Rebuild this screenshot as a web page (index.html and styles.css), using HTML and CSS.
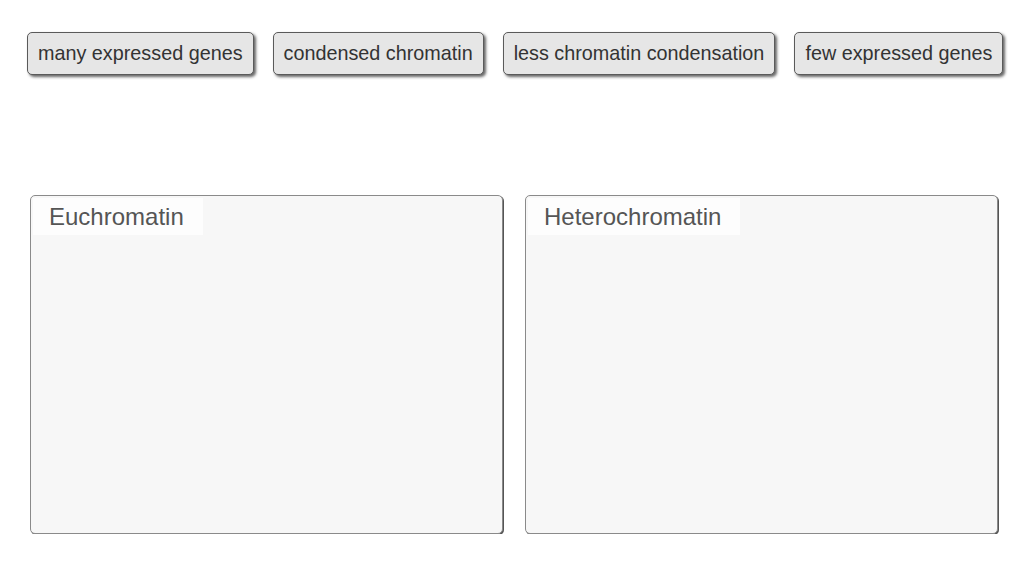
FILE: index.html
```html
<!DOCTYPE html>
<html lang="en">
<head>
  <meta charset="UTF-8" />
  <title>Sort the terms</title>
  <link rel="stylesheet" href="styles.css">
</head>
<body>
  <div class="chips">
    <div class="chip">many expressed genes</div>
    <div class="chip">condensed chromatin</div>
    <div class="chip">less chromatin condensation</div>
    <div class="chip">few expressed genes</div>
  </div>

  <div class="bins">
    <div class="bin">
      <div class="bin-label">Euchromatin</div>
    </div>
    <div class="bin">
      <div class="bin-label">Heterochromatin</div>
    </div>
  </div>
</body>
</html>
```

FILE: styles.css
```css
body {
  margin: 0;
  font-family: "Liberation Sans", Arial, sans-serif;
  background: #fff;
  color: #333;
}
.chips {
  display: flex;
  gap: 19px;
  padding: 32px 0 0 27px;
}
.chip {
  font-size: 19.8px;
  line-height: 41px;
  padding: 0 10px;
  background: #e6e6e6;
  border: 1px solid #5a5a5a;
  border-radius: 5px;
  box-shadow: 2px 2px 3px #666;
  white-space: nowrap;
}
.bins {
  display: flex;
  gap: 22px;
  padding: 120px 0 0 30px;
}
.bin {
  box-sizing: border-box;
  width: 473px;
  height: 339px;
  background: #f7f7f7;
  border: 1px solid #8a8a8a;
  border-radius: 5px;
  box-shadow: 1px 1px 0 #555;
  padding: 2px;
}
.bin-label {
  display: inline-block;
  background: #fdfdfd;
  font-size: 24px;
  line-height: 37px;
  padding: 0 19px 0 16px;
  color: #555;
}
```
